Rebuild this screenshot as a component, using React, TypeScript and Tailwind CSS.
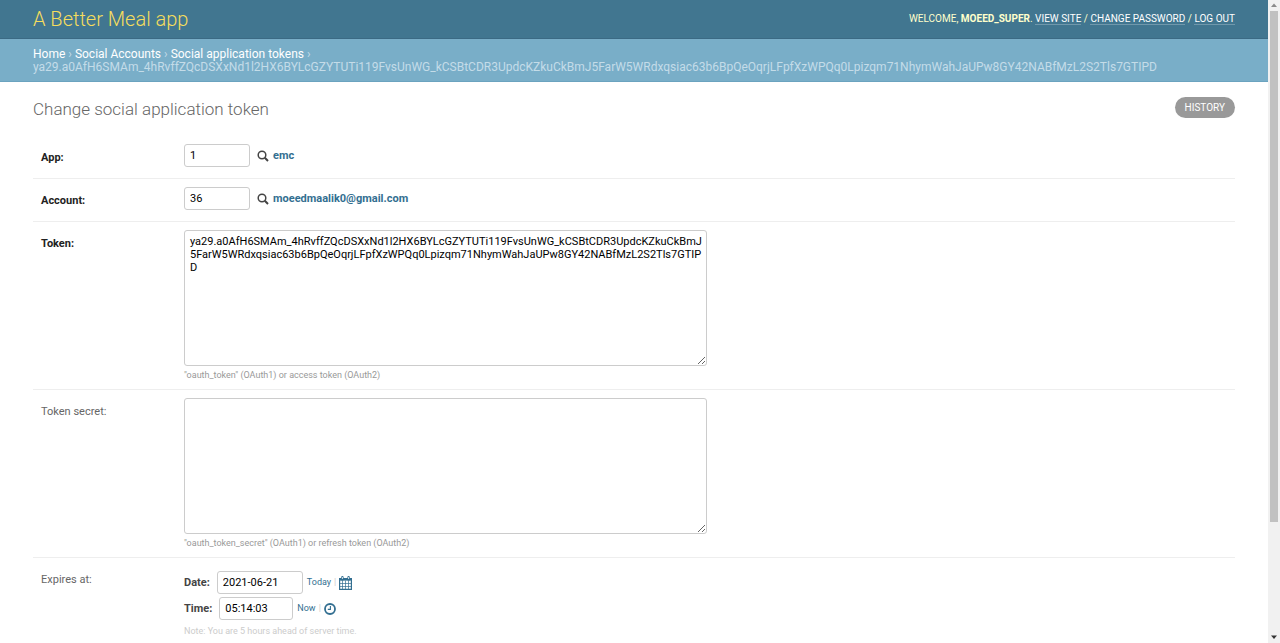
import type { ReactNode } from 'react';

const token =
  'ya29.a0AfH6SMAm_4hRvffZQcDSXxNd1l2HX6BYLcGZYTUTi119FvsUnWG_kCSBtCDR3UpdcKZkuCkBmJ5FarW5WRdxqsiac63b6BpQeOqrjLFpfXzWPQq0Lpizqm71NhymWahJaUPw8GY42NABfMzL2S2Tls7GTIPD';

const crumbs = ['Home', 'Social Accounts', 'Social application tokens'];

const inputClass = 'rounded-[3px] border border-[#ccc] bg-white pr-px pl-[5px] text-[11px] text-black';

function SearchIcon() {
  return (
    <svg className="h-3 w-3" viewBox="0 0 12 12" fill="none" stroke="#444" aria-hidden="true">
      <circle cx="5" cy="5" r="3.8" strokeWidth="1.5" />
      <path d="M7.8 7.8 11 11" strokeWidth="2" />
    </svg>
  );
}

function CalendarIcon() {
  return (
    <svg className="h-[14px] w-[13px]" viewBox="0 0 13 14" fill="none" stroke="#336f91" aria-hidden="true">
      <path d="M.6 3h11.8v10.4H.6z" strokeWidth="1.2" />
      <path d="M0 3.3h13" strokeWidth="2.6" />
      <path d="M3.4 1.2v2.2M9.6 1.2v2.2" strokeWidth="2.4" strokeLinecap="round" />
      <path d="M3.4 1v2M9.6 1v2" stroke="#fff" strokeWidth=".8" />
      <path d="M3.5 4.5v9M6.5 4.5v9M9.5 4.5v9M.5 7.5h12M.5 10.5h12" strokeWidth=".7" />
    </svg>
  );
}

function ClockIcon() {
  return (
    <svg className="h-3 w-3" viewBox="0 0 12 12" fill="none" stroke="#336f91" aria-hidden="true">
      <circle cx="6" cy="6" r="5" strokeWidth="1.8" />
      <path d="M6.4 3v3.4H3.8" strokeWidth="1.1" />
    </svg>
  );
}

function FormRow({ label, id, required, children }: { label: string; id: string; required?: boolean; children: ReactNode }) {
  return (
    <div className="flex border-b border-[#eee] px-2 pt-2">
      <label
        htmlFor={id}
        className={`w-[143px] shrink-0 pt-[7px] text-[11px] leading-[14px] ${required ? 'font-bold text-[#222]' : 'text-[#666]'}`}
      >
        {label}
      </label>
      <div className="min-w-0 flex-1">{children}</div>
    </div>
  );
}

function LookupField({ id, value, name }: { id: string; value: string; name: string }) {
  return (
    <div className="flex items-center pb-[11px]">
      <input id={id} type="text" defaultValue={value} className={`${inputClass} h-[23px] w-[66px]`} />
      <a href="#" aria-label="Lookup" className="ml-[7px]">
        <SearchIcon />
      </a>
      <a href="#" className="ml-1 text-[11px] leading-[14px] font-bold text-[#336f91]">
        {name}
      </a>
    </div>
  );
}

function TextField({ id, value, help }: { id: string; value: string; help: string }) {
  return (
    <div className="pb-[7px]">
      <textarea
        id={id}
        defaultValue={value}
        spellCheck={false}
        className={`${inputClass} block h-[136px] w-[523px] max-w-full resize py-1 leading-[13px] break-all`}
      />
      <p className="pt-[3px] text-[9px] leading-[13px] text-[#999]">{help}</p>
    </div>
  );
}

function Scrollbar() {
  return (
    <div className="flex w-3 shrink-0 flex-col items-center bg-[#f1f1f1]" aria-hidden="true">
      <svg className="h-[11px] w-3" viewBox="0 0 12 11" fill="#8b8b8b">
        <path d="M6 3.5 9 7H3z" />
      </svg>
      <div className="flex w-full flex-1 flex-col px-[2px]">
        <div className="grow-[511] basis-0 bg-[#c1c1c1]" />
        <div className="grow-[110] basis-0" />
      </div>
      <svg className="h-[11px] w-3" viewBox="0 0 12 11" fill="#333">
        <path d="M6 7 9 3.5H3z" />
      </svg>
    </div>
  );
}

export default function App() {
  return (
    <div className="flex h-screen overflow-hidden bg-white font-[Roboto,sans-serif] text-[11px] text-[#333]">
      <div className="min-w-0 flex-1 overflow-y-auto [scrollbar-width:none]">
        <header className="flex h-[39px] items-center justify-between border-b border-[#3b6a84] bg-[#417690] px-[33px] pb-px text-[#ffc]">
          <h1 className="text-[20px] leading-6 font-light text-[#f5dd5d]">
            <a href="#">A Better Meal app</a>
          </h1>
          <div className="text-[10px] leading-3 uppercase">
            Welcome, <strong>moeed_super</strong>.{' '}
            <a href="#" className="border-b border-white/25 text-white">View site</a> /{' '}
            <a href="#" className="border-b border-white/25 text-white">Change password</a> /{' '}
            <a href="#" className="border-b border-white/25 text-white">Log out</a>
          </div>
        </header>

        <nav className="border-b border-[#6ba3bf] bg-[#79aec8] px-[33px] pt-[9px] pb-[7px] text-[12px] leading-[13px] text-[#c4dce8]">
          {crumbs.map((crumb) => (
            <span key={crumb}>
              <a href="#" className="text-white">{crumb}</a> ›{' '}
            </span>
          ))}
          <div className="break-all">{token}</div>
        </nav>

        <main className="px-[33px]">
          <div className="flex items-start justify-between pt-[15px] pb-4">
            <h2 className="pt-px text-[17px] leading-[22px] font-light text-[#666]">Change social application token</h2>
            <a href="#" className="rounded-full bg-[#999] px-[10px] text-[10px] leading-[21px] text-white uppercase">
              History
            </a>
          </div>

          <form>
            <FormRow label="App:" id="id_app" required>
              <LookupField id="id_app" value="1" name="emc" />
            </FormRow>
            <FormRow label="Account:" id="id_account" required>
              <LookupField id="id_account" value="36" name="moeedmaalik0@gmail.com" />
            </FormRow>
            <FormRow label="Token:" id="id_token" required>
              <TextField id="id_token" value={token} help={'"oauth_token" (OAuth1) or access token (OAuth2)'} />
            </FormRow>
            <FormRow label="Token secret:" id="id_token_secret">
              <TextField id="id_token_secret" value="" help={'"oauth_token_secret" (OAuth1) or refresh token (OAuth2)'} />
            </FormRow>
            <FormRow label="Expires at:" id="id_expires_at_0">
              <div className="pt-[5px] pb-2">
                <div className="flex items-center pb-[3px]">
                  <label htmlFor="id_expires_at_0" className="mr-[7px] pt-px font-bold text-[#444]">Date:</label>
                  <input id="id_expires_at_0" type="text" defaultValue="2021-06-21" className={`${inputClass} h-[23px] w-[86px]`} />
                  <a href="#" className="ml-1 pt-px text-[9px] text-[#336f91]">Today</a>
                  <span className="mx-[3px] text-[9px] text-[#ccc]">|</span>
                  <a href="#" aria-label="Choose a date"><CalendarIcon /></a>
                </div>
                <div className="flex items-center">
                  <label htmlFor="id_expires_at_1" className="mr-[7px] pt-px font-bold text-[#444]">Time:</label>
                  <input id="id_expires_at_1" type="text" defaultValue="05:14:03" className={`${inputClass} h-[23px] w-[74px]`} />
                  <a href="#" className="ml-1 pt-px text-[9px] text-[#336f91]">Now</a>
                  <span className="mx-[3px] text-[9px] text-[#ccc]">|</span>
                  <a href="#" aria-label="Choose a time"><ClockIcon /></a>
                </div>
                <p className="pt-[5px] text-[9px] leading-[13px] text-[#ccc]">Note: You are 5 hours ahead of server time.</p>
              </div>
            </FormRow>
          </form>
        </main>
      </div>
      <Scrollbar />
    </div>
  );
}
